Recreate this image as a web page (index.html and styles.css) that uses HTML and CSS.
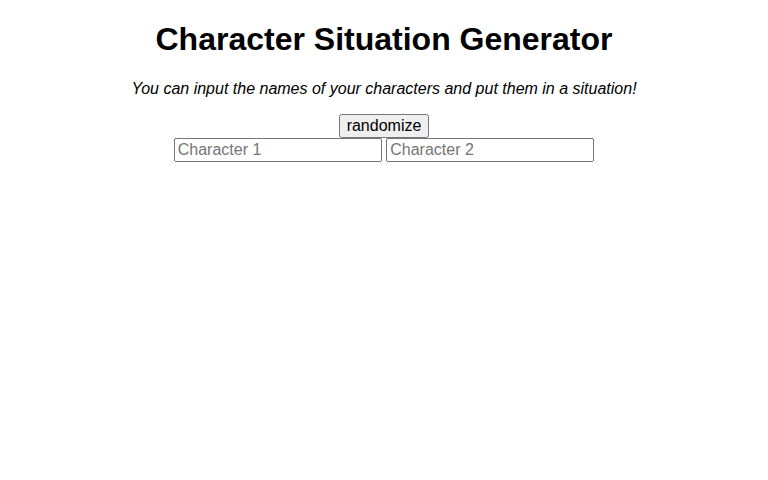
FILE: index.html
```html
<!DOCTYPE html>
<html>
<head>
<meta charset="utf-8">
<title>Character Situation Generator</title>
<link rel="stylesheet" href="styles.css">
</head>
<body>
<h1 class="title">Character Situation Generator</h1>
<p class="intro">You can input the names of your characters and put them in a situation!</p>
<div class="controls">
<button class="btn" type="button">randomize</button>
</div>
<div class="fields">
<input class="field" type="text" placeholder="Character 1"> <input class="field" type="text" placeholder="Character 2">
</div>
</body>
</html>
```
FILE: styles.css
```css
body {
  margin: 0;
  font-family: "Liberation Sans", Arial, sans-serif;
  text-align: center;
  background: #fff;
  color: #000;
}
.title {
  font-size: 32px;
  margin: 21.44px 0;
}
.intro {
  font-style: italic;
  font-size: 16px;
  margin: 16px 0;
}
.btn, .field {
  font-family: "Liberation Sans", Arial, sans-serif;
  font-size: 16px;
}
.btn {
  height: 24px;
  padding: 1px 6px;
}
.field {
  width: 208px;
  height: 24px;
  box-sizing: border-box;
  padding: 1px 2px;
}
```
